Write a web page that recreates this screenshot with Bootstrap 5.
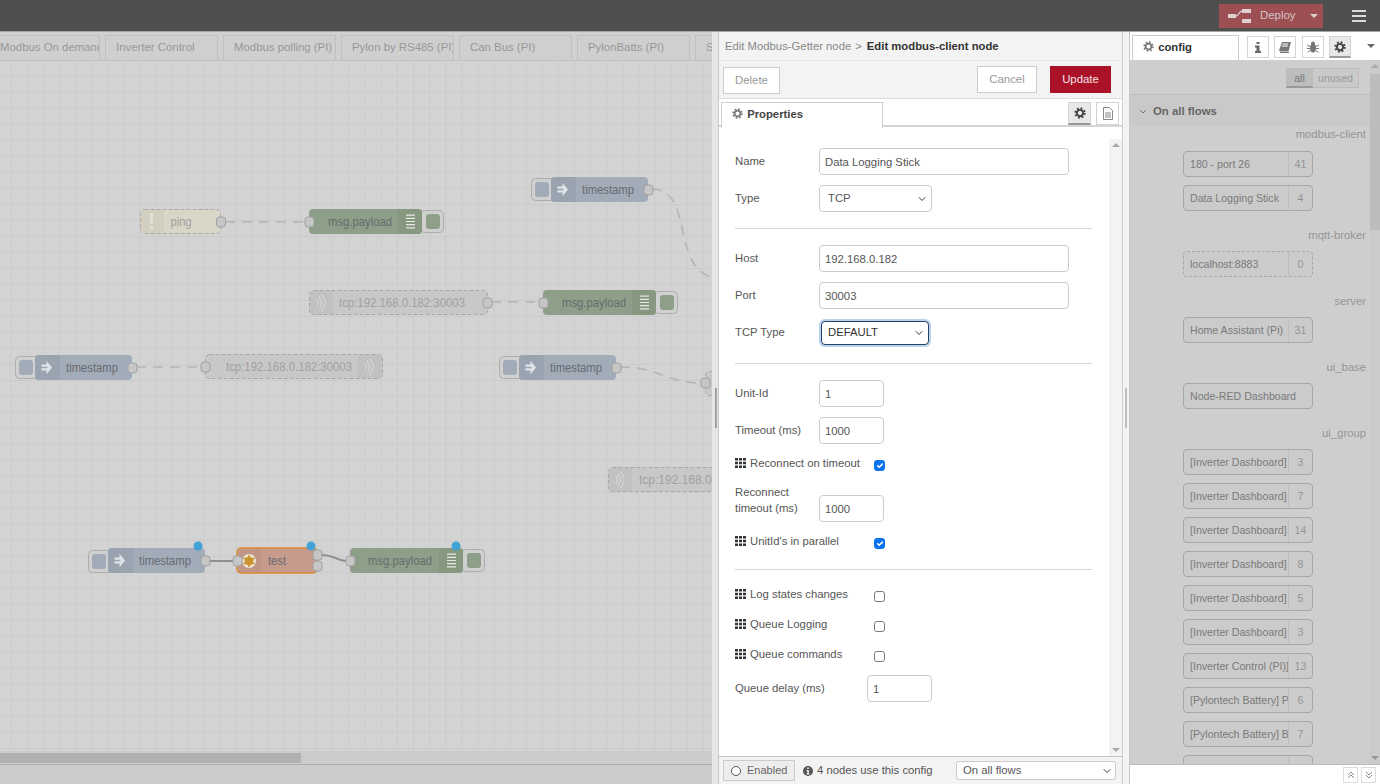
<!DOCTYPE html>
<html lang="en">
<head>
<meta charset="utf-8">
<title>Node-RED</title>
<link href="https://cdn.jsdelivr.net/npm/bootstrap@5.3.0/dist/css/bootstrap.min.css" rel="stylesheet">
<style>
html,body{height:100%;margin:0;overflow:hidden}
body{font-family:"Liberation Sans",Arial,sans-serif;font-size:11.3px;color:#555;background:#cdcdcd}
.topbar{height:32px;background:#4f4f4f;border-bottom:1px solid #a4a4a4;flex:none}
.deploy{width:104px;height:24px;background:#9d4f54;color:#d4c4c4;font-size:11.4px;margin-right:29px}
.deploy-ico{margin-left:9px}
.deploy-txt{margin-left:9px}
.deploy-caret{width:0;height:0;border:4px solid transparent;border-top:4px solid #dcd0d0;border-bottom:0;margin:0 5px 0 auto}
.burger{width:14px;height:12px;margin-right:14px;border-top:2px solid #d8d8d8;border-bottom:2px solid #d8d8d8;position:relative}
.burger::after{content:"";position:absolute;left:0;right:0;top:3px;height:2px;background:#d8d8d8}
.workarea{height:752px}
.leftcol{width:712px;flex:none;background:#d3d3d3}
.flowtabs{height:29px;background:#d0d0d0;border-bottom:1px solid #c2c2c2;padding-top:3px;gap:5px;overflow:hidden;flex:none}
.flowtab{flex:0 0 113px;height:25px;border:1px solid #c0c0c0;border-bottom:0;background:#cfcfcf;color:#979797;font-size:11.4px;line-height:23px;padding-left:10px;white-space:nowrap;overflow:hidden}
.flowtab.firsttab{flex-basis:100px;padding-left:0;border-left:0}
.flowtab.lasttab{flex-basis:30px}
.flowcanvas{flex:1;min-height:0;overflow:hidden}
.flowcanvas svg{display:block}
.hscroll{height:13px;background:#cccccc;flex:none;padding:2px 0 1px}
.hscroll div{width:301px;height:10px;background:#b0b0b0}
.leftfoot{height:20px;background:#cbcbcb;border-top:1px solid #aeaeae;flex:none}
.handle{width:7px;flex:none;background:#e6e6e6;position:relative;border-right:1px solid #c8c8c8}
.handle::after{content:"";position:absolute;left:3px;top:356px;width:2px;height:40px;background:#a2a2a2}
.tray{width:404px;flex:none;background:#fff;color:#555;border-right:1px solid #cfcfcf}
.traytitle{height:29px;background:#f3f3f3;border-bottom:1px solid #e6e6e6;padding:0 0 0 6px;color:#888;font-size:11.3px;flex:none;white-space:nowrap}
.traytitle b{color:#333;margin-left:5px}
.traybar{height:38px;background:#f3f3f3;border-bottom:1px solid #ddd;padding:0 11px 0 4px;flex:none}
.rbtn{height:27px;background:#fff;border:1px solid #ccc;color:#999;font-size:11.4px;padding:0;border-radius:0;line-height:25px}
.rbtn.del{width:57px;margin-top:1px}
.rbtn.can{width:60px;margin-right:13px}
.rbtn.upd{width:61px;background:#ab1228;border-color:#ab1228;color:#f2e3e5}
.traytabs{height:28px;border-bottom:2px solid #d6d6d6;padding:3px 3px 0 2px;gap:5px;flex:none;background:#fff}
.proptab{width:162px;height:26px;border:1px solid #d0d0d0;border-bottom:0;background:#fff;margin-right:auto;padding-left:10px;font-weight:700;font-size:11.3px;color:#444;line-height:22px}
.tabcog{color:#777;vertical-align:-1px;margin-right:1px}
.sqbtn{width:23px;height:23px;border:1px solid #d4d4d4;background:#fff;flex:none;color:#666}
.sqbtn.on{background:#e8e8e8;border-bottom:2px solid #999;color:#444}
.traybody{flex:1;min-height:0}
.formwrap{flex:1;min-width:0;padding:21px 17px 0 16px;font-size:11.3px}
.vtrack{width:13px;flex:none;margin-top:12px;background:#f3f3f3;position:relative}
.vtrack::before{content:"";position:absolute;left:3px;top:4px;border:4px solid transparent;border-top:0;border-bottom:4px solid #aaa}
.vtrack::after{content:"";position:absolute;left:3px;bottom:4px;border:4px solid transparent;border-bottom:0;border-top:4px solid #aaa}
.frow{display:flex;align-items:center;height:27px;margin-bottom:10px}
.frow label{width:84px;flex:none;margin:0;color:#555}
.frow label.lbl2{line-height:16px;position:relative;top:-9px}
.frow label.lblq{width:132px}
.inp{height:27px;font-size:11.3px;color:#555;padding:0 5px;border:1px solid #ccc;border-radius:4px;min-height:0;box-shadow:none}
.inp.wide{width:250px}
.inp.mid{width:113px}
.inp.nar{width:65px}
.form-select.inp{padding:0 6px 0 8px;background-position:right 4px center;background-size:10px 8px}
.inp.focused{height:24px;width:108px;margin-left:2px;border:1px solid #2b3e63;box-shadow:0 0 0 2px #b9d4ee;color:#333;padding-left:6px}
.sep{height:1px;background:#d6d6d6;margin:16px 0;width:357px;opacity:1;border:0}
.sep.sep17{margin-top:17px}
.chkrow{display:flex;align-items:center;height:20px}
.chkrow label{width:139px;flex:none;margin:0;position:relative;top:-2px;white-space:nowrap;color:#555}
.chkbox{width:11px;height:11px;margin:0;border:1px solid #777;border-radius:2px;background-size:10px;flex:none}
.chkbox:checked{background-color:#0a72ee;border-color:#0a72ee}
.tgrid{width:11px;height:10px;margin-right:4px;vertical-align:-1px;color:#333}
.up9{margin-top:9px}
.up10{margin-top:10px}
.up11{margin-top:11px}
.up20{margin-top:20px}
.trayfoot{height:28px;background:#f3f3f3;border-top:1px solid #c4c4c4;padding:0 6px 0 4px;flex:none;font-size:11.3px}
.enbtn{width:72px;height:21px;background:#ededed;border:1px solid #ccc;color:#666;font-size:11px;padding-left:7px;gap:6px;margin-right:8px}
.ring{width:10px;height:10px;border:1px solid #555;border-radius:50%;background:#fff;flex:none}
.flowsel{width:160px;height:19px;font-size:11.3px;padding:0 6px;color:#555;border:1px solid #ccc;border-radius:3px;margin-left:auto;min-height:0;background-position:right 3px center;background-size:10px 8px}
.sideside{width:7px;flex:none;background:#f3f3f3;border-right:1px solid #c8c8c8;position:relative}
.sideside::after{content:"";position:absolute;left:2px;top:356px;width:2px;height:40px;background:#bdbdbd}
.sidebar{flex:1;min-width:0;background:#cecece}
.sidetabs{height:28px;background:#fff;padding:3px 0 0 2px;flex:none}
.cfgtab{width:107px;height:25px;background:#fff;border:1px solid #ccc;border-bottom:0;font-weight:700;color:#333;padding-left:10px;line-height:22px;margin-right:8px;font-size:11.3px}
.sidetabs .sqbtn{width:22px;height:22px;margin:1px 5.3px 0 0}
.caretd{width:0;height:0;border:4px solid transparent;border-top:4px solid #666;border-bottom:0;margin-left:11px;margin-top:9px}
.sidebody{flex:1;min-height:0}
.sidelist{flex:1;min-width:0;overflow:hidden}
.sidetrack{width:10px;flex:none;background:#cbcbcb;position:relative;padding-top:14px}
.sidetrack div{height:156px;background:#bcbcbc}
.sidetrack::before{content:"";position:absolute;left:1px;top:4px;border:4px solid transparent;border-top:0;border-bottom:4px solid #aaa}
.sidetrack::after{content:"";position:absolute;left:1px;bottom:4px;border:4px solid transparent;border-bottom:0;border-top:4px solid #999}
.filterrow{height:35px;border-bottom:1px solid #bfbfbf;padding:8px 11px 0 0;justify-content:flex-end}
.segb{height:20px;border:1px solid #bcbcbc;font-size:10.7px;color:#999;line-height:18px;text-align:center;background:#cacaca}
.segb.seg1{width:27px;background:#bdbdbd;color:#777;border-bottom:2px solid #999}
.segb.seg2{width:46px;border-left:0}
.allflows{height:31px;background:#c9c9c9;padding:2px 0 0 9px;font-weight:700;color:#666;font-size:11.4px;gap:6px}
.grouplbl{color:#959595;text-align:right;height:16px;line-height:16px;margin:16px 4px 8px 0;font-size:11.3px}
.grouplbl.gfirst{margin:0 4px 9px 0}
.cfgitem{width:130px;height:26px;margin:0 0 8px 53px;border:1px solid #a8a8a8;border-radius:4px;background:#cbcbcb;color:#7a7a7a;font-size:10.6px;line-height:24px;display:flex}
.cfgname{flex:1;min-width:0;padding-left:6px;overflow:hidden;white-space:nowrap}
.cfgnum{width:24px;flex:none;border-left:1px solid #bfbfbf;text-align:center;color:#959595;font-size:10.6px}
.cfgitem.dash{border-style:dashed}
.sidefoot{height:20px;background:#fff;border-top:1px solid #bcbcbc;flex:none;padding-right:4px;gap:3px}
.minibtn{width:15px;height:16px;border:1px solid #ddd;color:#888}
text.nl{font-family:"Liberation Sans",Arial,sans-serif;font-size:12.5px;fill:#666a6e;text-anchor:middle}
text.nd{fill:#a0a0a0}
.port{fill:#c6c6c6;stroke:#a0a0a0}
.btnbox{fill:#d0d0d0;stroke:#adadad}
.ts{fill:#a2acb9}
.tsic{fill:#9aa4b1}
.pay{fill:#8d9f88}
.payic{fill:#869880}
.gone{fill:#c8c8c8;stroke:#a8a8a8;stroke-dasharray:4 2}
.goneic{fill:#c1c1c1}
.badge-dot{fill:#41a3d6}
</style>
</head>
<body class="d-flex flex-column">
<svg width="0" height="0" class="position-absolute">
  <defs>
    <symbol id="cog" viewBox="-8 -8 16 16"><circle r="4.200" fill="none" stroke="currentColor" stroke-width="2.600"/><circle r="6.400" fill="none" stroke="currentColor" stroke-width="2.400" stroke-dasharray="2.5 2.53"/></symbol>
    <symbol id="thg" viewBox="0 0 11 10"><path fill="currentColor" d="M0 0h3v2.600H0zM4 0h3v2.600H4zM8 0h3v2.600H8zM0 3.700h3v2.600H0zM4 3.700h3v2.600H4zM8 3.700h3v2.600H8zM0 7.400h3V10H0zM4 7.400h3V10H4zM8 7.400h3V10H8z"/></symbol>
    <symbol id="arrow" viewBox="0 0 14 20"><path fill="#dfe3e8" d="M1 6.500h6V2l6.500 8L7 18v-4.500H1V11h7V9H1z"/></symbol>
    <symbol id="waves" viewBox="0 0 12 20"><path fill="none" stroke="#dedede" stroke-width="1.100" stroke-dasharray="2.500 1" d="M3 3c4 4 4 10 0 14M6 1c5 5 5 13 0 18M1 6c2 2 2 6 0 8"/></symbol>
    <symbol id="lines" viewBox="0 0 10 16"><path stroke="#e6e8e2" stroke-width="1.300" d="M0 1h10M0 4.500h10M0 8h10M0 11.500h10M0 15h10"/></symbol>
  </defs>
</svg>

<header class="topbar d-flex align-items-center justify-content-end">
  <div class="deploy d-flex align-items-center">
    <svg class="deploy-ico" width="23" height="14" viewBox="0 0 23 14" aria-hidden="true"><path fill="#dcd0d0" d="M0 5h8v4H0zM14 0h9v4h-9zM14 10h9v4h-9z"/><path fill="none" stroke="#dcd0d0" stroke-width="1.300" d="M8 7c3 0 3-5 6-5"/></svg>
    <span class="deploy-txt">Deploy</span>
    <span class="deploy-caret"></span>
  </div>
  <div class="burger"></div>
</header>

<div class="workarea d-flex">
  <section class="leftcol d-flex flex-column">
    <nav class="flowtabs d-flex">
      <div class="flowtab firsttab">Modbus On demand</div>
      <div class="flowtab">Inverter Control</div>
      <div class="flowtab">Modbus polling (PI)</div>
      <div class="flowtab">Pylon by RS485 (PI)</div>
      <div class="flowtab">Can Bus (PI)</div>
      <div class="flowtab">PylonBatts (PI)</div>
      <div class="flowtab lasttab">S</div>
    </nav>
    <div class="flowcanvas">
      <svg width="712" height="690" viewBox="0 61 712 690" role="img" aria-label="Flow canvas">
        <defs>
          <pattern id="gr" x="10.500" y="12" width="16.100" height="16" patternUnits="userSpaceOnUse"><path d="M.5 0V16M0 .5H16.100" fill="none" stroke="#cbcbcb" stroke-width="1"/></pattern>
        </defs>
        <rect x="0" y="61" width="712" height="690" fill="#d3d3d3"/>
        <rect x="0" y="61" width="712" height="690" fill="url(#gr)"/>

        <g fill="none" stroke="#b5b5b5" stroke-width="1.600" stroke-dasharray="10 7">
          <path d="M652 189C695 189 670 272 716 278"/>
          <path d="M225 222H305"/>
          <path d="M491 302H540"/>
          <path d="M136 367H201"/>
          <path d="M620 367C660 367 665 383 702 383"/>
        </g>
        <g fill="none" stroke="#8f8f8f" stroke-width="2">
          <path d="M209 561H233"/>
          <path d="M321 555C336 555 336 561 346 561"/>
        </g>

        <!-- timestamp 1 -->
        <g>
          <rect class="btnbox" x="531.500" y="178.500" width="24" height="22" rx="4"/>
          <rect class="ts" x="535" y="182" width="14" height="15" rx="3"/>
          <rect class="ts" x="551" y="177" width="97" height="25" rx="4"/>
          <path class="tsic" d="M555 177h21v25h-21a4 4 0 0 1-4-4v-17a4 4 0 0 1 4-4z"/>
          <use href="#arrow" x="556" y="181" width="13" height="17"/>
          <text class="nl" x="608" y="194" textLength="52" lengthAdjust="spacingAndGlyphs">timestamp</text>
          <rect class="port" x="644" y="185" width="9" height="10" rx="3"/>
        </g>
        <!-- ping -->
        <g>
          <rect x="140.500" y="209.500" width="80" height="24" rx="4" fill="#d9d6c8" stroke="#aaa" stroke-dasharray="4 2"/>
          <rect x="141" y="210" width="23" height="23" fill="#d3cfc0"/>
          <path d="M150 213h3l-.5 11h-2zM150 226h3v3h-3z" fill="#e4e2d8"/>
          <text class="nl nd" x="181" y="226" textLength="21" lengthAdjust="spacingAndGlyphs">ping</text>
          <rect class="port" x="216.500" y="217" width="9" height="10" rx="3"/>
        </g>
        <!-- msg.payload 1 -->
        <g>
          <rect class="btnbox" x="420.500" y="210.500" width="23" height="22" rx="4"/>
          <rect class="pay" x="426" y="214" width="14" height="15" rx="3"/>
          <rect class="pay" x="309" y="209" width="113" height="25" rx="4"/>
          <path class="payic" d="M398 209h20a4 4 0 0 1 4 4v17a4 4 0 0 1-4 4h-20z"/>
          <use href="#lines" x="406" y="214" width="9" height="15"/>
          <text class="nl" x="360" y="226" textLength="64" lengthAdjust="spacingAndGlyphs">msg.payload</text>
          <rect class="port" x="305" y="217" width="9" height="10" rx="3"/>
        </g>
        <!-- tcp 1 -->
        <g>
          <rect class="gone" x="309.500" y="290.500" width="178" height="24" rx="4"/>
          <rect class="goneic" x="310" y="291" width="23" height="23"/>
          <use href="#waves" x="316" y="293" width="11" height="20"/>
          <text class="nl nd" x="402" y="307" textLength="126" lengthAdjust="spacingAndGlyphs">tcp:192.168.0.182:30003</text>
          <rect class="port" x="483" y="298" width="9" height="10" rx="3"/>
        </g>
        <!-- msg.payload 2 -->
        <g>
          <rect class="btnbox" x="654.500" y="291.500" width="23" height="22" rx="4"/>
          <rect class="pay" x="660" y="295" width="14" height="15" rx="3"/>
          <rect class="pay" x="543" y="290" width="113" height="25" rx="4"/>
          <path class="payic" d="M632 290h20a4 4 0 0 1 4 4v17a4 4 0 0 1-4 4h-20z"/>
          <use href="#lines" x="640" y="295" width="9" height="15"/>
          <text class="nl" x="594" y="307" textLength="64" lengthAdjust="spacingAndGlyphs">msg.payload</text>
          <rect class="port" x="539" y="298" width="9" height="10" rx="3"/>
        </g>
        <!-- timestamp 2 -->
        <g>
          <rect class="btnbox" x="15.500" y="356.500" width="24" height="22" rx="4"/>
          <rect class="ts" x="19" y="360" width="14" height="15" rx="3"/>
          <rect class="ts" x="35" y="355" width="97" height="25" rx="4"/>
          <path class="tsic" d="M39 355h21v25h-21a4 4 0 0 1-4-4v-17a4 4 0 0 1 4-4z"/>
          <use href="#arrow" x="40" y="359" width="13" height="17"/>
          <text class="nl" x="92" y="372" textLength="52" lengthAdjust="spacingAndGlyphs">timestamp</text>
          <rect class="port" x="128" y="363" width="9" height="10" rx="3"/>
        </g>
        <!-- tcp 2 -->
        <g>
          <rect class="gone" x="205.500" y="354.500" width="177" height="24" rx="4"/>
          <rect class="goneic" x="358" y="355" width="24" height="23"/>
          <use href="#waves" x="364" y="357" width="11" height="20"/>
          <text class="nl nd" x="289" y="371" textLength="126" lengthAdjust="spacingAndGlyphs">tcp:192.168.0.182:30003</text>
          <rect class="port" x="201" y="362" width="9" height="10" rx="3"/>
        </g>
        <!-- timestamp 3 -->
        <g>
          <rect class="btnbox" x="499.500" y="356.500" width="24" height="22" rx="4"/>
          <rect class="ts" x="503" y="360" width="14" height="15" rx="3"/>
          <rect class="ts" x="519" y="355" width="97" height="25" rx="4"/>
          <path class="tsic" d="M523 355h21v25h-21a4 4 0 0 1-4-4v-17a4 4 0 0 1 4-4z"/>
          <use href="#arrow" x="524" y="359" width="13" height="17"/>
          <text class="nl" x="576" y="372" textLength="52" lengthAdjust="spacingAndGlyphs">timestamp</text>
          <rect class="port" x="612" y="363" width="9" height="10" rx="3"/>
        </g>
        <!-- node behind the tray -->
        <g>
          <rect class="gone" x="705.500" y="371.500" width="40" height="24" rx="4"/>
          <rect class="port" x="701" y="378" width="9" height="10" rx="3"/>
        </g>
        <!-- tcp 3 -->
        <g>
          <rect class="gone" x="608.500" y="467.500" width="178" height="24" rx="4"/>
          <rect class="goneic" x="609" y="468" width="23" height="23"/>
          <use href="#waves" x="615" y="470" width="11" height="20"/>
          <text class="nl nd" x="677" y="484" textLength="76" lengthAdjust="spacingAndGlyphs">tcp:192.168.0.</text>
        </g>
        <!-- timestamp 4 -->
        <g>
          <rect class="btnbox" x="88.500" y="550.500" width="24" height="22" rx="4"/>
          <rect class="ts" x="92" y="554" width="14" height="15" rx="3"/>
          <rect class="ts" x="108" y="548" width="97" height="25" rx="4"/>
          <path class="tsic" d="M112 548h21v25h-21a4 4 0 0 1-4-4v-17a4 4 0 0 1 4-4z"/>
          <use href="#arrow" x="113" y="552" width="13" height="17"/>
          <text class="nl" x="165" y="565" textLength="52" lengthAdjust="spacingAndGlyphs">timestamp</text>
          <rect class="port" x="201" y="556" width="9" height="10" rx="3"/>
          <circle class="badge-dot" cx="198" cy="546" r="4.500"/>
        </g>
        <!-- test -->
        <g>
          <rect x="237" y="548" width="80" height="25" rx="4" fill="#c69b8c" stroke="#dc8a35" stroke-width="1.500"/>
          <rect x="239" y="549.500" width="22" height="22" fill="#bb9182" opacity=".6"/>
          <circle cx="249" cy="561" r="7" fill="#ece5d8"/>
          <circle cx="249" cy="561" r="4.500" fill="#d19a38"/>
          <path d="M249 555v12M243.500 558l11 6M243.500 564l11-6" stroke="#c8902e" stroke-width="1.500"/>
          <text class="nl" x="277" y="565" textLength="18" lengthAdjust="spacingAndGlyphs">test</text>
          <rect class="port" x="233" y="556" width="9" height="10" rx="3"/>
          <rect class="port" x="313" y="550" width="9" height="10" rx="3"/>
          <rect class="port" x="313" y="561" width="9" height="10" rx="3"/>
          <circle class="badge-dot" cx="311" cy="546" r="4.500"/>
        </g>
        <!-- msg.payload 3 -->
        <g>
          <rect class="btnbox" x="461.500" y="549.500" width="23" height="22" rx="4"/>
          <rect class="pay" x="467" y="553" width="14" height="15" rx="3"/>
          <rect class="pay" x="350" y="548" width="113" height="25" rx="4"/>
          <path class="payic" d="M439 548h20a4 4 0 0 1 4 4v17a4 4 0 0 1-4 4h-20z"/>
          <use href="#lines" x="447" y="553" width="9" height="15"/>
          <text class="nl" x="400" y="565" textLength="64" lengthAdjust="spacingAndGlyphs">msg.payload</text>
          <rect class="port" x="346" y="556" width="9" height="10" rx="3"/>
          <circle class="badge-dot" cx="456" cy="546" r="4.500"/>
        </g>
      </svg>
    </div>
    <div class="hscroll"><div></div></div>
    <div class="leftfoot"></div>
  </section>

  <div class="handle"></div>

  <section class="tray d-flex flex-column">
    <div class="traytitle d-flex align-items-center"><span>Edit Modbus-Getter node</span><span class="ms-1">&gt;</span><b>Edit modbus-client node</b></div>
    <div class="traybar d-flex align-items-center">
      <button type="button" class="btn rbtn del me-auto">Delete</button>
      <button type="button" class="btn rbtn can">Cancel</button>
      <button type="button" class="btn rbtn upd">Update</button>
    </div>
    <div class="traytabs d-flex">
      <div class="proptab"><svg width="11" height="11" class="tabcog"><use href="#cog"/></svg> Properties</div>
      <div class="sqbtn on d-flex align-items-center justify-content-center"><svg width="12" height="12"><use href="#cog"/></svg></div>
      <div class="sqbtn d-flex align-items-center justify-content-center"><svg width="10" height="13" viewBox="0 0 10 13"><path fill="none" stroke="#888" d="M.5.500h6l3 3v9H.500zM2 6h6M2 8h6M2 10h6"/></svg></div>
    </div>
    <div class="traybody d-flex">
      <form class="formwrap">
        <div class="frow"><label>Name</label><input class="form-control inp wide" value="Data Logging Stick"></div>
        <div class="frow mb-0"><label>Type</label><select class="form-select inp mid"><option>TCP</option></select></div>
        <hr class="sep">
        <div class="frow"><label>Host</label><input class="form-control inp wide" value="192.168.0.182"></div>
        <div class="frow"><label>Port</label><input class="form-control inp wide" value="30003"></div>
        <div class="frow mb-0"><label>TCP Type</label><select class="form-select inp focused"><option>DEFAULT</option></select></div>
        <hr class="sep sep17">
        <div class="frow"><label>Unit-Id</label><input class="form-control inp nar" value="1"></div>
        <div class="frow"><label>Timeout (ms)</label><input class="form-control inp nar" value="1000"></div>
        <div class="chkrow up11"><label><svg class="tgrid"><use href="#thg"/></svg>Reconnect on timeout</label><input class="form-check-input chkbox" type="checkbox" checked></div>
        <div class="frow up20"><label class="lbl2">Reconnect<br>timeout (ms)</label><input class="form-control inp nar" value="1000"></div>
        <div class="chkrow up11"><label><svg class="tgrid"><use href="#thg"/></svg>UnitId's in parallel</label><input class="form-check-input chkbox" type="checkbox" checked></div>
        <hr class="sep">
        <div class="chkrow"><label><svg class="tgrid"><use href="#thg"/></svg>Log states changes</label><input class="form-check-input chkbox" type="checkbox"></div>
        <div class="chkrow up10"><label><svg class="tgrid"><use href="#thg"/></svg>Queue Logging</label><input class="form-check-input chkbox" type="checkbox"></div>
        <div class="chkrow up10"><label><svg class="tgrid"><use href="#thg"/></svg>Queue commands</label><input class="form-check-input chkbox" type="checkbox"></div>
        <div class="frow up9"><label class="lblq">Queue delay (ms)</label><input class="form-control inp nar" value="1"></div>
      </form>
      <div class="vtrack"></div>
    </div>
    <div class="trayfoot d-flex align-items-center">
      <div class="enbtn d-flex align-items-center"><span class="ring"></span>Enabled</div>
      <svg width="10" height="10" viewBox="0 0 10 10" class="me-1"><circle cx="5" cy="5" r="5" fill="#555"/><path fill="#f3f3f3" d="M4.200 1.500h1.600v1.500H4.200zM3.500 4h2.300v3.500h.8v1H3.500v-1h.8V5h-.8z"/></svg>
      <span>4 nodes use this config</span>
      <select class="form-select flowsel"><option>On all flows</option></select>
    </div>
  </section>

  <div class="sideside"></div>

  <aside class="sidebar d-flex flex-column">
    <div class="sidetabs d-flex">
      <div class="cfgtab"><svg width="11" height="11" class="tabcog"><use href="#cog"/></svg> config</div>
      <div class="sqbtn d-flex align-items-center justify-content-center"><svg width="6" height="11" viewBox="0 0 6 11"><path fill="#666" d="M1.500 0h3v2h-3zM0 3.500h4.500V9H6v2H0V9h1.500V5.500H0z"/></svg></div>
      <div class="sqbtn d-flex align-items-center justify-content-center"><svg width="12" height="11" viewBox="0 0 12 11"><path fill="#777" d="M3 0h9L9.500 9.500H1.500C.5 9.500 0 8.500.3 7.500zM3.500 1.500l-.4 1h6l.3-1zM2.900 3.500l-.3 1h6l.3-1z"/><path fill="#777" d="M1 10h9v1H1z"/></svg></div>
      <div class="sqbtn d-flex align-items-center justify-content-center"><svg width="12" height="12" viewBox="0 0 12 12"><ellipse cx="6" cy="7" rx="3" ry="4.500" fill="#777"/><circle cx="6" cy="2.500" r="2" fill="#777"/><path stroke="#777" stroke-width="1" fill="none" d="M0 4l3 1.500M12 4L9 5.500M0 7.500h3M12 7.500H9M.5 11.500L3 9.500M11.500 11.500L9 9.500"/></svg></div>
      <div class="sqbtn on d-flex align-items-center justify-content-center"><svg width="12" height="12"><use href="#cog"/></svg></div>
      <div class="caretd"></div>
    </div>
    <div class="sidebody d-flex">
      <div class="sidelist">
        <div class="filterrow d-flex">
          <div class="segb seg1">all</div><div class="segb seg2">unused</div>
        </div>
        <div class="allflows d-flex align-items-center"><svg width="8" height="6" viewBox="0 0 8 6"><path d="M1 1l3 3 3-3" fill="none" stroke="#777" stroke-width="1"/></svg><span>On all flows</span></div>
        <div class="grouplbl gfirst">modbus-client</div>
        <div class="cfgitem"><span class="cfgname">180 - port 26</span><span class="cfgnum">41</span></div>
        <div class="cfgitem"><span class="cfgname">Data Logging Stick</span><span class="cfgnum">4</span></div>
        <div class="grouplbl">mqtt-broker</div>
        <div class="cfgitem dash"><span class="cfgname">localhost:8883</span><span class="cfgnum">0</span></div>
        <div class="grouplbl">server</div>
        <div class="cfgitem"><span class="cfgname">Home Assistant (Pi)</span><span class="cfgnum">31</span></div>
        <div class="grouplbl">ui_base</div>
        <div class="cfgitem"><span class="cfgname">Node-RED Dashboard</span></div>
        <div class="grouplbl">ui_group</div>
        <div class="cfgitem"><span class="cfgname">[Inverter Dashboard]</span><span class="cfgnum">3</span></div>
        <div class="cfgitem"><span class="cfgname">[Inverter Dashboard]</span><span class="cfgnum">7</span></div>
        <div class="cfgitem"><span class="cfgname">[Inverter Dashboard]</span><span class="cfgnum">14</span></div>
        <div class="cfgitem"><span class="cfgname">[Inverter Dashboard]</span><span class="cfgnum">8</span></div>
        <div class="cfgitem"><span class="cfgname">[Inverter Dashboard]</span><span class="cfgnum">5</span></div>
        <div class="cfgitem"><span class="cfgname">[Inverter Dashboard]</span><span class="cfgnum">3</span></div>
        <div class="cfgitem"><span class="cfgname">[Inverter Control (PI)]</span><span class="cfgnum">13</span></div>
        <div class="cfgitem"><span class="cfgname">[Pylontech Battery] P</span><span class="cfgnum">6</span></div>
        <div class="cfgitem"><span class="cfgname">[Pylontech Battery] B</span><span class="cfgnum">7</span></div>
        <div class="cfgitem"><span class="cfgname">[Pylontech Battery] C</span><span class="cfgnum">8</span></div>
      </div>
      <div class="sidetrack"><div></div></div>
    </div>
    <div class="sidefoot d-flex align-items-center justify-content-end">
      <div class="minibtn d-flex align-items-center justify-content-center"><svg width="8" height="8" viewBox="0 0 8 8"><path fill="none" stroke="#888" d="M1 4l3-3 3 3M1 7l3-3 3 3"/></svg></div>
      <div class="minibtn d-flex align-items-center justify-content-center"><svg width="8" height="8" viewBox="0 0 8 8"><path fill="none" stroke="#888" d="M1 1l3 3 3-3M1 4l3 3 3-3"/></svg></div>
    </div>
  </aside>
</div>
<script src="https://cdn.jsdelivr.net/npm/bootstrap@5.3.0/dist/js/bootstrap.bundle.min.js"></script>
</body>
</html>
